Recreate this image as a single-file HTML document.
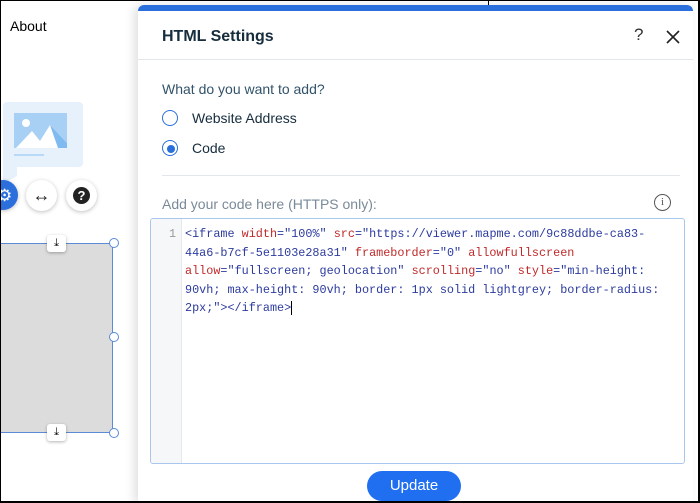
<!DOCTYPE html>
<html style="overflow:hidden"><head><style>
html,body{margin:0;width:700px;height:503px;overflow:hidden}
body{position:relative;background:#fff;font-family:"Liberation Sans",sans-serif;}
.frame{position:absolute;left:0;top:0;width:700px;height:503px;border:1px solid #000;border-right:2px solid #000;border-bottom:2px solid #000;box-sizing:border-box;pointer-events:none;z-index:10}
.abs{position:absolute}
.modal{position:absolute;left:138px;top:5px;width:555px;height:492px;background:#fff;box-shadow:-4px 0 10px rgba(0,0,0,.12);border-top:6px solid #2b6fdc;border-radius:6px 6px 0 0}
.code{font-family:"Liberation Mono",monospace;font-size:11.8px;line-height:18.5px;color:#2c3b9e;white-space:pre}
.r{color:#c02a2a}
.radio{position:absolute;width:14px;height:14px;border:1.5px solid #2b6fdc;border-radius:50%}
</style></head><body>
<div class="abs" style="left:10px;top:18px;font-size:14px;color:#000">About</div>
<div class="abs" style="left:488px;top:0;width:1px;height:6px;background:#000"></div>
<div class="abs" style="left:3px;top:102px;width:80px;height:65px;background:#e6f1fc;border-radius:4px"></div>
<div class="abs" style="left:3px;top:160px;width:14px;height:20px;background:#e6f1fc;transform:skewY(-30deg)"></div>
<svg class="abs" style="left:14px;top:113px" width="56" height="45"><rect x="0" y="0" width="53" height="35" fill="#a8d0f5"/><circle cx="12" cy="10" r="4" fill="#fff"/><path d="M2 35 L18 18 L26 28 L36 12 L53 30 L53 35Z" fill="#fff"/><path d="M36 12 L53 30 L53 35 L44 35Z" fill="#7fbaf0"/><line x1="0" y1="42" x2="30" y2="42" stroke="#a8d0f5" stroke-width="1.5"/></svg>
<div class="abs" style="left:-12px;top:180px;width:30px;height:30px;border-radius:50%;background:#2b6fdc;box-shadow:0 1px 4px rgba(0,0,0,.25)"></div>
<div class="abs" style="left:-3px;top:186px;color:#fff;font-size:17px">⚙</div>
<div class="abs" style="left:26px;top:180px;width:31px;height:31px;border-radius:50%;background:#fff;box-shadow:0 1px 4px rgba(0,0,0,.25);text-align:center;line-height:31px;font-size:18px;font-weight:bold;color:#222">↔</div>
<div class="abs" style="left:66px;top:180px;width:31px;height:31px;border-radius:50%;background:#fff;box-shadow:0 1px 4px rgba(0,0,0,.25)"></div>
<div class="abs" style="left:73px;top:187px;width:17px;height:17px;border-radius:50%;background:#222;color:#fff;font-size:13px;font-weight:bold;text-align:center;line-height:17px">?</div>
<div class="abs" style="left:-1px;top:243px;width:114px;height:190px;background:#dcdcdc;border:1px solid #5b8ad6;box-sizing:border-box"></div>
<div class="abs" style="left:109px;top:238px;width:8px;height:8px;border:1px solid #5b8ad6;border-radius:50%;background:#fff"></div>
<div class="abs" style="left:109px;top:332px;width:8px;height:8px;border:1px solid #5b8ad6;border-radius:50%;background:#fff"></div>
<div class="abs" style="left:109px;top:428px;width:8px;height:8px;border:1px solid #5b8ad6;border-radius:50%;background:#fff"></div>
<div class="abs" style="left:47px;top:235px;width:19px;height:17px;background:#fff;border-radius:3px;box-shadow:0 1px 3px rgba(0,0,0,.3);text-align:center;font-size:11px;line-height:17px">⤓</div>
<div class="abs" style="left:47px;top:424px;width:19px;height:17px;background:#fff;border-radius:3px;box-shadow:0 1px 3px rgba(0,0,0,.3);text-align:center;font-size:11px;line-height:17px">⤓</div>
<div class="modal">
<div class="abs" style="left:24px;top:17px;font-size:16px;font-weight:bold;color:#162d3d">HTML Settings</div>
<div class="abs" style="left:496px;top:14px;font-size:17px;color:#333">?</div>
<svg class="abs" style="left:528px;top:19px" width="14" height="14"><path d="M1 1L13 13M13 1L1 13" stroke="#222" stroke-width="1.6"/></svg>
<div class="abs" style="left:0;top:48px;width:555px;height:1px;background:#e3e6ea"></div>
<div class="abs" style="left:24px;top:70px;font-size:14px;color:#32536a">What do you want to add?</div>
<div class="radio" style="left:24px;top:99px"></div>
<div class="abs" style="left:54px;top:99px;font-size:14px;color:#162d3d">Website Address</div>
<div class="radio" style="left:24px;top:129px"></div>
<div class="abs" style="left:28.5px;top:133.5px;width:8px;height:8px;border-radius:50%;background:#2b6fdc"></div>
<div class="abs" style="left:54px;top:129px;font-size:14px;color:#162d3d">Code</div>
<div class="abs" style="left:24px;top:164px;width:518px;height:1px;background:#e3e6ea"></div>
<div class="abs" style="left:24px;top:185px;font-size:14px;color:#7a8a99">Add your code here (HTTPS only):</div>
<div class="abs" style="left:516px;top:183px;width:15px;height:15px;border:1.3px solid #555;border-radius:50%;font-size:11px;text-align:center;line-height:15px;color:#555;font-family:'Liberation Serif',serif">i</div>
<div class="abs" style="left:12px;top:207px;width:535px;height:246px;border:1px solid #a9c6ef;border-radius:3px;box-sizing:border-box;overflow:hidden">
<div class="abs" style="left:0;top:0;width:30px;height:100%;background:#f6f7f8;border-right:1px solid #e5e7ea"></div>
<div class="abs code" style="left:18px;top:6px;color:#999">1</div>
<div class="abs code" style="left:34px;top:6px">&lt;iframe <span class="r">width</span>="100%" <span class="r">src</span>="https://viewer.mapme.com/9c88ddbe-ca83-
44a6-b7cf-5e1103e28a31" <span class="r">frameborder</span>="0" <span class="r">allowfullscreen</span>
<span class="r">allow</span>="fullscreen; geolocation" <span class="r">scrolling</span>="no" <span class="r">style</span>="min-height:
90vh; max-height: 90vh; border: 1px solid lightgrey; border-radius:
2px;"&gt;&lt;/iframe&gt;<span style="border-left:1px solid #000"></span></div>
</div>
<div class="abs" style="left:229px;top:460px;width:94px;height:30px;border-radius:15px;background:#1f6ff0;color:#fff;font-size:15px;text-align:center;line-height:30px">Update</div>
</div>
<div class="frame"></div>
</body></html>
